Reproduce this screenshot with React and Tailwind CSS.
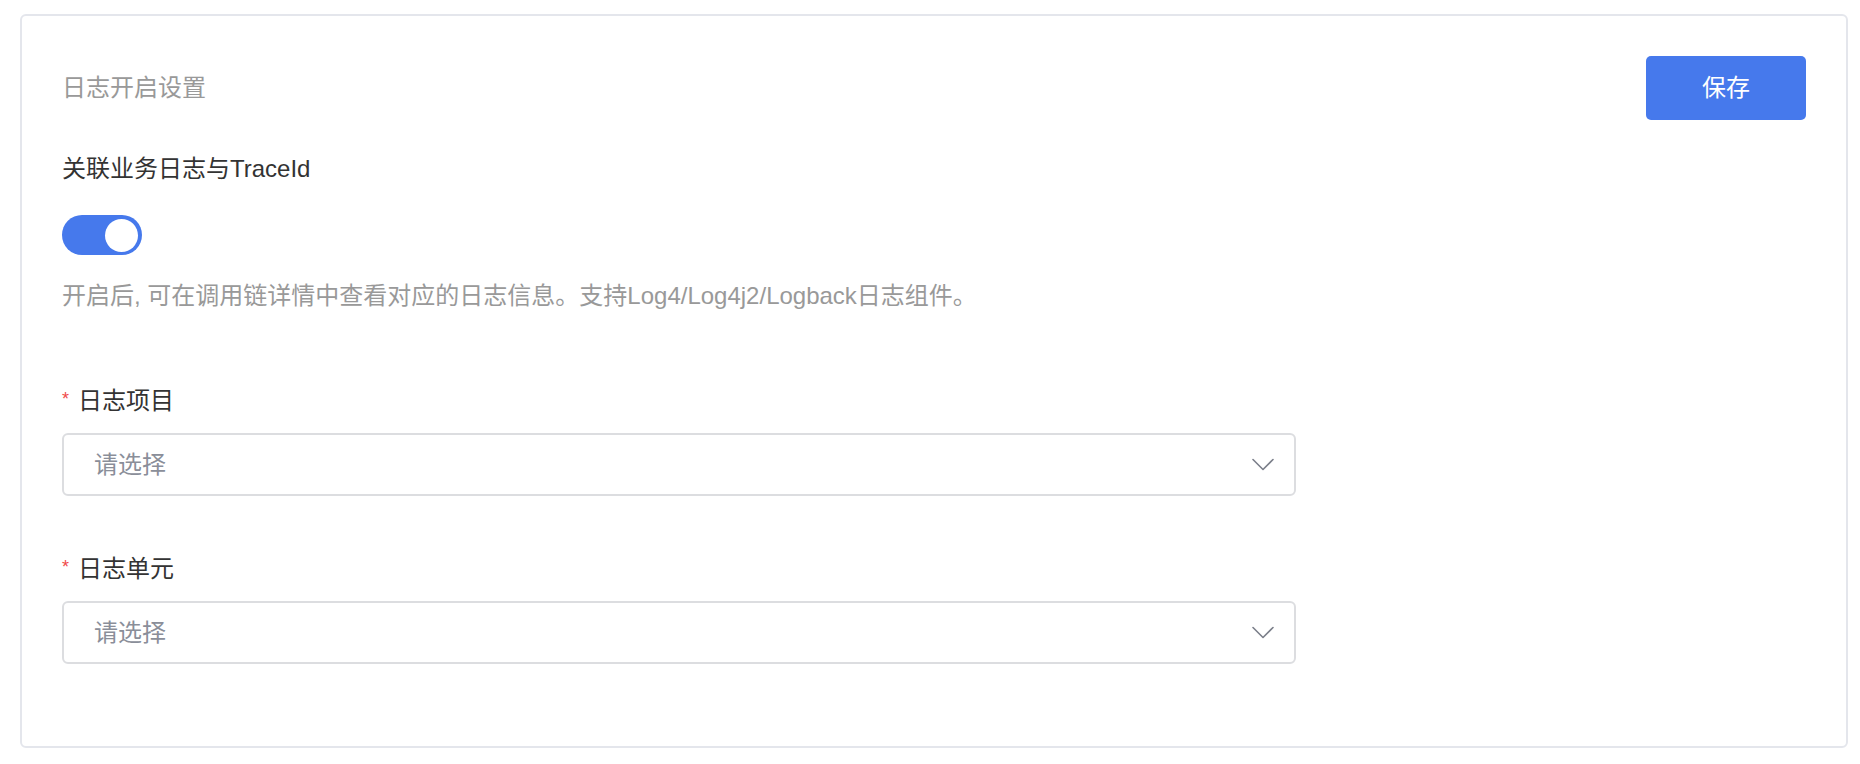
import React, { useState } from 'react';

const font = { fontFamily: '"Liberation Sans", "Noto Sans CJK SC", sans-serif' };

const Chevron = () => (
    <svg width="22" height="13" viewBox="0 0 22 13" fill="none" className="shrink-0">
        <path d="M1 1.5 L11 11.5 L21 1.5" stroke="#7b7f8a" strokeWidth="1.6" strokeLinecap="round" strokeLinejoin="round" />
    </svg>
);

const SelectField = ({ label }) => (
    <div>
        <div className="flex items-center h-[36px] text-[24px] text-[#333]">
            <span className="text-[#f04a4a] text-[18px] mr-[9px] -mt-[4px]">*</span>
            <span>{label}</span>
        </div>
        <div className="mt-[14px] w-[1234px] h-[63px] border-2 border-[#dcdde0] rounded-[6px] flex items-center justify-between pl-[30px] pr-[20px] bg-white">
            <span className="text-[24px] text-[#8a8e99]">请选择</span>
            <Chevron />
        </div>
    </div>
);

export default function App() {
    const [enabled, setEnabled] = useState(true);

    return (
        <div className="bg-white w-[1860px] h-[764px] pt-[14px] pl-[20px]" style={font}>
            <div className="w-[1828px] h-[734px] border-2 border-[#e4e6ec] rounded-[6px] px-[40px] pt-[40px]">
                {/* Header */}
                <div className="flex items-center justify-between h-[64px]">
                    <h2 className="text-[24px] text-[#999] font-normal">日志开启设置</h2>
                    <button className="w-[160px] h-[64px] bg-[#4679ec] text-white text-[24px] rounded-[5px]">保存</button>
                </div>

                {/* TraceId toggle */}
                <div className="mt-[31px] h-[36px] flex items-center text-[24px] text-[#333]">关联业务日志与TraceId</div>
                <button
                    onClick={() => setEnabled(!enabled)}
                    className={`mt-[28px] w-[80px] h-[40px] rounded-full flex items-center px-[4px] ${enabled ? 'bg-[#4679ec] justify-end' : 'bg-gray-300 justify-start'}`}
                >
                    <span className="w-[33px] h-[33px] rounded-full bg-white block" />
                </button>
                <p className="mt-[23px] h-[36px] flex items-center text-[24px] text-[#999]">
                    开启后, 可在调用链详情中查看对应的日志信息。支持Log4/Log4j2/Logback日志组件。
                </p>

                {/* Fields */}
                <div className="mt-[69px]">
                    <SelectField label="日志项目" />
                </div>
                <div className="mt-[55px]">
                    <SelectField label="日志单元" />
                </div>
            </div>
        </div>
    );
}
